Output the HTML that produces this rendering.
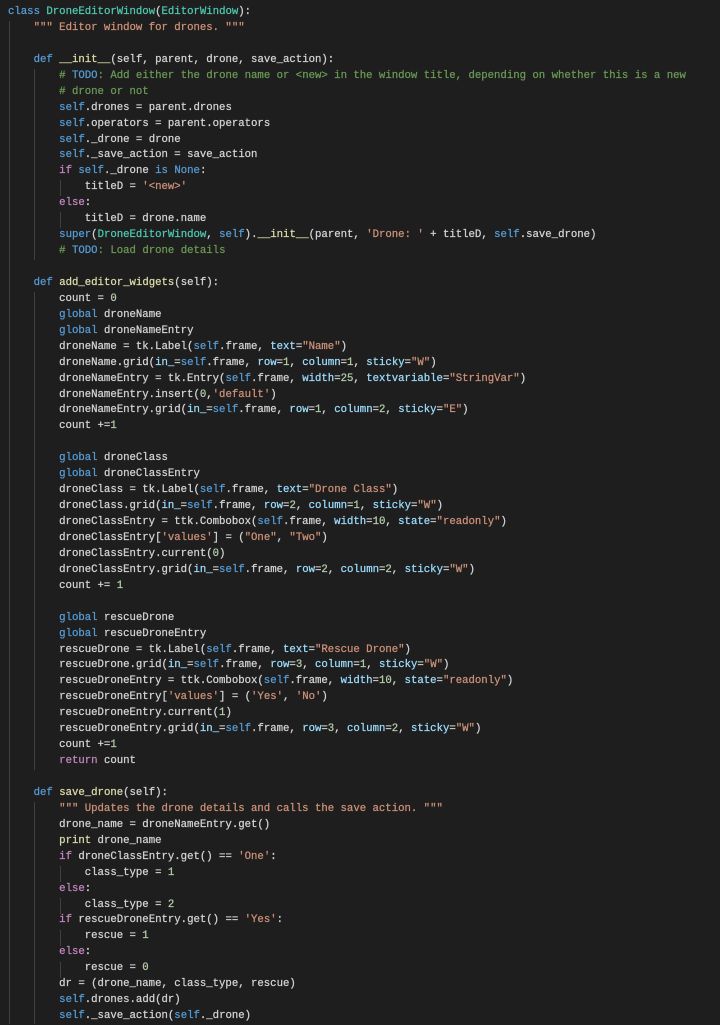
<!DOCTYPE html>
<html><head><meta charset="utf-8">
<style>
html,body{margin:0;padding:0;background:#1e1e1e;width:720px;height:1024px;overflow:hidden}
#code{position:absolute;left:8px;top:5px;font-family:"Liberation Mono",monospace;font-size:10.67px;line-height:15.94px;color:#d4d4d4;white-space:pre;-webkit-text-stroke:0.25px}
.g{position:absolute;width:1px;background:#404040}
.k{color:#569cd6}.p{color:#c586c0}.c{color:#4ec9b0}.s{color:#ce9178}.m{color:#6a9955}.f{color:#dcdcaa}.v{color:#9cdcfe}.n{color:#b5cea8}
</style></head><body>
<div class="g" style="left:9px;top:21px;height:1003px"></div>
<div class="g" style="left:34px;top:68.7px;height:191.3px"></div>
<div class="g" style="left:34px;top:292px;height:478px"></div>
<div class="g" style="left:34px;top:802px;height:222px"></div>
<div class="g" style="left:60px;top:180.3px;height:15.9px"></div>
<div class="g" style="left:60px;top:212.2px;height:15.9px"></div>
<div class="g" style="left:60px;top:866px;height:15.9px"></div>
<div class="g" style="left:60px;top:897.9px;height:15.9px"></div>
<div class="g" style="left:60px;top:929.8px;height:15.9px"></div>
<div class="g" style="left:60px;top:961.7px;height:15.9px"></div>
<div id="code"><span class="k">class</span> <span class="c">DroneEditorWindow</span>(<span class="c">EditorWindow</span>):
    <span class="s">""" Editor window for drones. """</span>

    <span class="k">def</span> <span class="f">__init__</span>(self, parent, drone, save_action):
        <span class="m"># <span class="k">TODO</span>: Add either the drone name or &lt;new&gt; in the window title, depending on whether this is a new</span>
        <span class="m"># drone or not</span>
        <span class="k">self</span>.drones = parent.drones
        <span class="k">self</span>.operators = parent.operators
        <span class="k">self</span>._drone = drone
        <span class="k">self</span>._save_action = save_action
        <span class="p">if</span> <span class="k">self</span>._drone <span class="k">is</span> <span class="k">None</span>:
            titleD = <span class="s">'&lt;new&gt;'</span>
        <span class="p">else</span>:
            titleD = drone.name
        <span class="k">super</span>(<span class="c">DroneEditorWindow</span>, <span class="k">self</span>).<span class="f">__init__</span>(parent, <span class="s">'Drone: '</span> + titleD, <span class="k">self</span>.save_drone)
        <span class="m"># <span class="k">TODO</span>: Load drone details</span>

    <span class="k">def</span> <span class="f">add_editor_widgets</span>(self):
        count = <span class="n">0</span>
        <span class="k">global</span> droneName
        <span class="k">global</span> droneNameEntry
        droneName = tk.Label(<span class="k">self</span>.frame, <span class="v">text</span>=<span class="s">"Name"</span>)
        droneName.grid(<span class="v">in_</span>=<span class="k">self</span>.frame, <span class="v">row</span>=<span class="n">1</span>, <span class="v">column</span>=<span class="n">1</span>, <span class="v">sticky</span>=<span class="s">"W"</span>)
        droneNameEntry = tk.Entry(<span class="k">self</span>.frame, <span class="v">width</span>=<span class="n">25</span>, <span class="v">textvariable</span>=<span class="s">"StringVar"</span>)
        droneNameEntry.insert(<span class="n">0</span>,<span class="s">'default'</span>)
        droneNameEntry.grid(<span class="v">in_</span>=<span class="k">self</span>.frame, <span class="v">row</span>=<span class="n">1</span>, <span class="v">column</span>=<span class="n">2</span>, <span class="v">sticky</span>=<span class="s">"E"</span>)
        count +=<span class="n">1</span>

        <span class="k">global</span> droneClass
        <span class="k">global</span> droneClassEntry
        droneClass = tk.Label(<span class="k">self</span>.frame, <span class="v">text</span>=<span class="s">"Drone Class"</span>)
        droneClass.grid(<span class="v">in_</span>=<span class="k">self</span>.frame, <span class="v">row</span>=<span class="n">2</span>, <span class="v">column</span>=<span class="n">1</span>, <span class="v">sticky</span>=<span class="s">"W"</span>)
        droneClassEntry = ttk.Combobox(<span class="k">self</span>.frame, <span class="v">width</span>=<span class="n">10</span>, <span class="v">state</span>=<span class="s">"readonly"</span>)
        droneClassEntry[<span class="s">'values'</span>] = (<span class="s">"One"</span>, <span class="s">"Two"</span>)
        droneClassEntry.current(<span class="n">0</span>)
        droneClassEntry.grid(<span class="v">in_</span>=<span class="k">self</span>.frame, <span class="v">row</span>=<span class="n">2</span>, <span class="v">column</span>=<span class="n">2</span>, <span class="v">sticky</span>=<span class="s">"W"</span>)
        count += <span class="n">1</span>

        <span class="k">global</span> rescueDrone
        <span class="k">global</span> rescueDroneEntry
        rescueDrone = tk.Label(<span class="k">self</span>.frame, <span class="v">text</span>=<span class="s">"Rescue Drone"</span>)
        rescueDrone.grid(<span class="v">in_</span>=<span class="k">self</span>.frame, <span class="v">row</span>=<span class="n">3</span>, <span class="v">column</span>=<span class="n">1</span>, <span class="v">sticky</span>=<span class="s">"W"</span>)
        rescueDroneEntry = ttk.Combobox(<span class="k">self</span>.frame, <span class="v">width</span>=<span class="n">10</span>, <span class="v">state</span>=<span class="s">"readonly"</span>)
        rescueDroneEntry[<span class="s">'values'</span>] = (<span class="s">'Yes'</span>, <span class="s">'No'</span>)
        rescueDroneEntry.current(<span class="n">1</span>)
        rescueDroneEntry.grid(<span class="v">in_</span>=<span class="k">self</span>.frame, <span class="v">row</span>=<span class="n">3</span>, <span class="v">column</span>=<span class="n">2</span>, <span class="v">sticky</span>=<span class="s">"W"</span>)
        count +=<span class="n">1</span>
        <span class="p">return</span> count

    <span class="k">def</span> <span class="f">save_drone</span>(self):
        <span class="s">""" Updates the drone details and calls the save action. """</span>
        drone_name = droneNameEntry.get()
        <span class="f">print</span> drone_name
        <span class="p">if</span> droneClassEntry.get() == <span class="s">'One'</span>:
            class_type = <span class="n">1</span>
        <span class="p">else</span>:
            class_type = <span class="n">2</span>
        <span class="p">if</span> rescueDroneEntry.get() == <span class="s">'Yes'</span>:
            rescue = <span class="n">1</span>
        <span class="p">else</span>:
            rescue = <span class="n">0</span>
        dr = (drone_name, class_type, rescue)
        <span class="k">self</span>.drones.add(dr)
        <span class="k">self</span>._save_action(<span class="k">self</span>._drone)</div>
</body></html>
